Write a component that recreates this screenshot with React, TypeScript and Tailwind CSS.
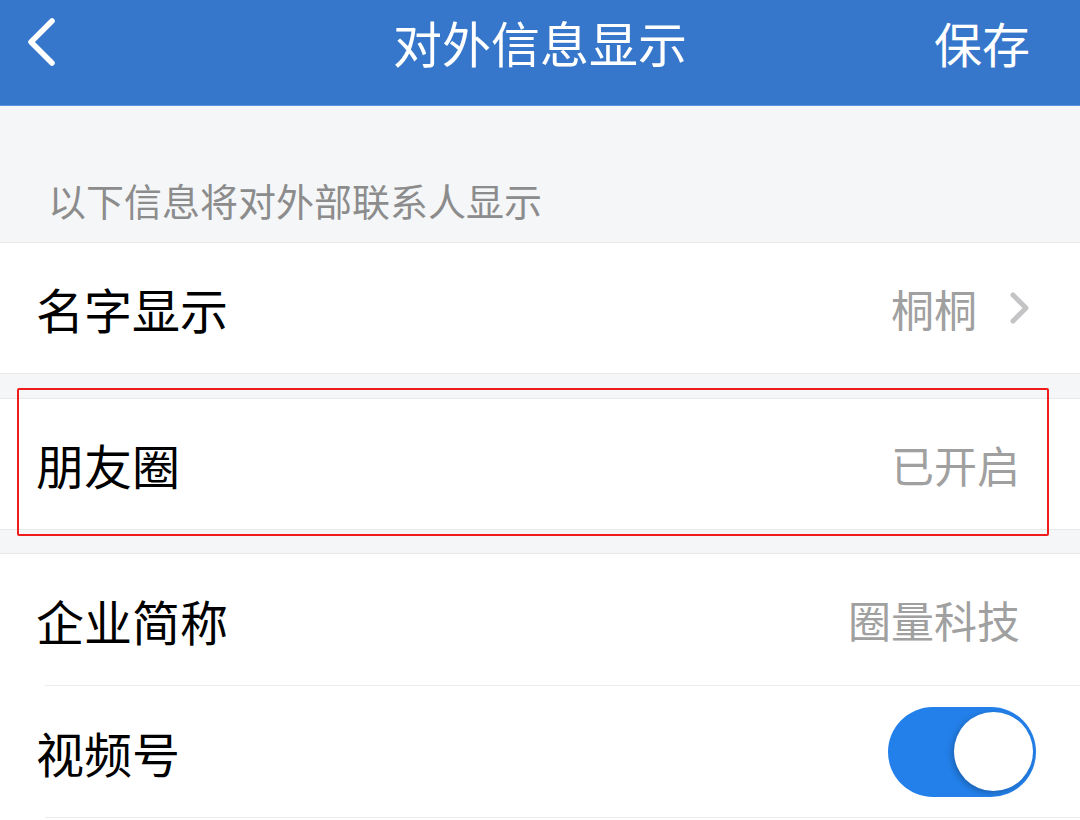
import React from "react";

const font = { fontFamily: '"Noto Sans CJK SC", "Noto Sans", sans-serif' };

function Chevron() {
  return (
    <svg width="22" height="34" viewBox="0 0 22 34" fill="none">
      <polyline points="4,4 17,17 4,30" stroke="#c4c4c6" strokeWidth="5" strokeLinecap="round" strokeLinejoin="round" />
    </svg>
  );
}

function Toggle() {
  return (
    <div className="w-[148px] h-[90px] rounded-full bg-[#2380ea] flex items-center justify-end pr-[3px]">
      <div className="w-[79px] h-[79px] rounded-full bg-white shadow-[-2px_2px_6px_rgba(0,0,0,0.25)]" />
    </div>
  );
}

export default function App() {
  return (
    <div className="w-[1080px] h-[820px] bg-[#f5f6f8] overflow-hidden" style={font}>
      {/* Nav bar */}
      <div className="h-[106px] bg-[#3677cb] border-b border-[#5b94dc] grid grid-cols-[1fr_auto_1fr] items-start pt-[12px] px-[25px]">
        <div className="h-[60px] flex items-center">
          <svg width="34" height="50" viewBox="0 0 34 50" fill="none">
            <polyline points="27,4 6,25 27,46" stroke="white" strokeWidth="5.5" strokeLinecap="round" strokeLinejoin="round" />
          </svg>
        </div>
        <div className="text-white text-[49px] leading-[60px]">对外信息显示</div>
        <div className="text-white text-[48px] leading-[60px] pr-[25px] text-right">保存</div>
      </div>

      {/* Caption */}
      <div className="h-[136px] flex items-end pb-[18px] pl-[48px]">
        <span className="text-[38px] leading-[48px] text-[#8c8c8c]">以下信息将对外部联系人显示</span>
      </div>

      {/* Name */}
      <div className="bg-white h-[132px] border-y border-[#e8e8e8] flex items-center pl-[36px] pr-[49px]">
        <span className="flex-1 text-[48px] text-black">名字显示</span>
        <span className="text-[43px] text-[#a0a0a0] mr-[32px]">桐桐</span>
        <Chevron />
      </div>

      <div className="h-[24px]" />

      {/* Moments, highlighted */}
      <div className="relative bg-white h-[132px] border-y border-[#e8e8e8] flex items-center pl-[36px] pr-[60px]">
        <span className="flex-1 text-[48px] text-black">朋友圈</span>
        <span className="text-[43px] text-[#a0a0a0]">已开启</span>
        <div className="absolute left-[17px] right-[31px] top-[-11px] bottom-[-7px] border-2 border-[#f01c1c] rounded-[2px]" />
      </div>

      <div className="h-[23px]" />

      {/* Company group */}
      <div className="bg-white border-t border-[#e8e8e8]">
        <div className="h-[131px] flex items-center pl-[36px] pr-[60px]">
          <span className="flex-1 text-[48px] text-black">企业简称</span>
          <span className="text-[43px] text-[#a0a0a0]">圈量科技</span>
        </div>
        <div className="ml-[45px] border-t border-[#ececec]" />
        <div className="h-[131px] flex items-center pl-[36px] pr-[44px]">
          <span className="flex-1 text-[48px] text-black">视频号</span>
          <Toggle />
        </div>
        <div className="ml-[45px] border-t border-[#ececec]" />
        <div className="h-[10px]" />
      </div>
    </div>
  );
}
